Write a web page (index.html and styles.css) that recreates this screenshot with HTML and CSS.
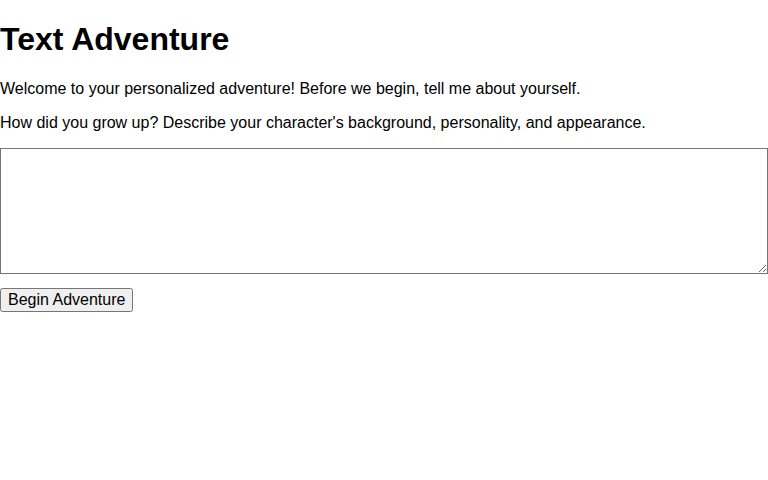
FILE: index.html
```html
<!DOCTYPE html>
<html lang="en">
<head>
    <meta charset="UTF-8">
    <meta name="viewport" content="width=device-width, initial-scale=1.0">
    <title>Text Adventure</title>
    <link rel="stylesheet" href="styles.css">
</head>
<body>
    <div class="game">
        <h1>Text Adventure</h1>
        <p>Welcome to your personalized adventure! Before we begin, tell me about yourself.</p>
        <p>How did you grow up? Describe your character's background, personality, and appearance.</p>
        <textarea id="characterInput" class="character-input"></textarea>
        <button id="beginButton" class="begin-button">Begin Adventure</button>
    </div>
</body>
</html>
```

FILE: styles.css
```css
body {
    font-family: "Liberation Sans", Arial, sans-serif;
    margin: 0;
    background-color: white;
    color: black;
}
h1 {
    font-size: 32px;
    margin: 0.67em 0;
}
p {
    font-size: 16px;
    margin: 16px 0;
}
.character-input {
    display: block;
    box-sizing: border-box;
    width: 100%;
    height: 126px;
    margin: 0;
    border: 1px solid #767676;
    font-family: "Liberation Mono", monospace;
}
.begin-button {
    display: block;
    margin-top: 14px;
    font-family: "Liberation Sans", Arial, sans-serif;
    font-size: 16px;
    padding: 1px 6px;
}
```
